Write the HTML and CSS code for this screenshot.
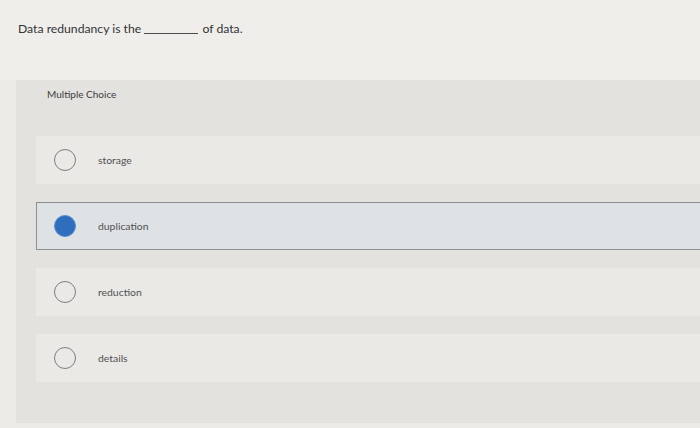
FILE: index.html
```html
<!DOCTYPE html>
<html lang="en">
<head>
<meta charset="utf-8">
<title>Multiple Choice</title>
<link rel="stylesheet" href="styles.css">
</head>
<body>
  <p class="question">Data redundancy is the <span class="blank"></span> of data.</p>
  <section class="panel">
    <div class="panel-label">Multiple Choice</div>
    <ul class="options">
      <li class="option"><span class="radio"></span><span class="option-text">storage</span></li>
      <li class="option option-selected"><span class="radio radio-on"></span><span class="option-text">duplication</span></li>
      <li class="option"><span class="radio"></span><span class="option-text">reduction</span></li>
      <li class="option"><span class="radio"></span><span class="option-text">details</span></li>
    </ul>
  </section>
</body>
</html>
```
FILE: styles.css
```css
html, body {
  margin: 0;
  padding: 0;
}

body {
  width: 700px;
  height: 428px;
  overflow: hidden;
  background: #ecebe7;
  font-family: Lato, "Open Sans", "Liberation Sans", sans-serif;
  color: #3a3b3d;
}

.question {
  margin: 0;
  padding: 21px 0 0 18px;
  height: 80px;
  box-sizing: border-box;
  font-size: 12.2px;
  line-height: 16px;
  color: #333436;
  background: #efeeea;
}

.blank {
  display: inline-block;
  width: 54px;
  height: 1px;
  margin: 0 1px 0 0;
  border-bottom: 1px solid #4a4b4d;
  vertical-align: -1px;
}

.panel {
  margin-left: 16px;
  height: 343px;
  box-sizing: border-box;
  padding-top: 8px;
  background: #e3e2de;
}

.panel-label {
  padding-left: 31px;
  font-size: 10px;
  line-height: 12px;
  color: #3c3d40;
}

.options {
  list-style: none;
  margin: 36px 0 0 20px;
  padding: 0;
  display: flex;
  flex-direction: column;
  gap: 18px;
}

.option {
  height: 48px;
  box-sizing: border-box;
  display: flex;
  align-items: center;
  gap: 22px;
  padding-left: 18px;
  background: #eae9e5;
}

.option-selected {
  background: #dfe2e5;
  border: 1px solid #8b8e93;
  border-right: none;
  padding-left: 17px;
}

.radio {
  width: 22px;
  height: 22px;
  box-sizing: border-box;
  border-radius: 50%;
  border: 1.4px solid #7d7e80;
  flex: none;
}

.radio-on {
  background: #2f6dbd;
  border: 1px solid #5a8ed0;
}

.option-text {
  font-size: 10.4px;
  line-height: 14px;
  color: #505154;
}
```
